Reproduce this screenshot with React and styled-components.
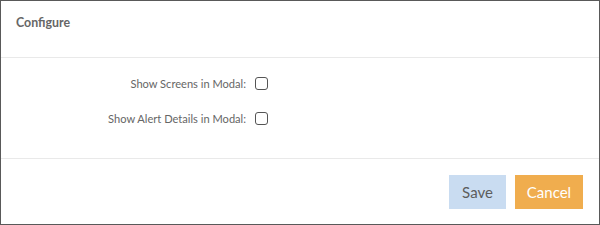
import React from "react";
import styled, { createGlobalStyle } from "styled-components";

const Global = createGlobalStyle`
  html, body { margin: 0; padding: 0; background: #fff; }
  body { font-family: Lato, "DejaVu Sans", sans-serif; }
  * { box-sizing: border-box; }
`;

const Modal = styled.div`
  width: 600px;
  height: 225px;
  border: 1px solid #595959;
  display: flex;
  flex-direction: column;
  background: #fff;
`;

const Header = styled.div`
  height: 57px;
  border-bottom: 1px solid #e9e9e9;
  padding: 14px 0 0 15px;
`;

const Title = styled.h4`
  margin: 0;
  font-size: 12.4px;
  font-weight: 700;
  color: #666;
  line-height: 16px;
`;

const Body = styled.div`
  height: 101px;
  border-bottom: 1px solid #e9e9e9;
  padding-top: 16px;
  display: flex;
  flex-direction: column;
  gap: 17px;
`;

const Row = styled.label`
  display: grid;
  grid-template-columns: 245px auto;
  column-gap: 9px;
  align-items: center;
  height: 18px;
`;

const Label = styled.span`
  text-align: right;
  font-size: 11.1px;
  color: #666;
`;

const Box = styled.span`
  width: 13px;
  height: 13px;
  border: 1px solid #555;
  border-radius: 3px;
  background: #fff;
  display: block;
`;

const Footer = styled.div`
  flex: 1;
  display: flex;
  justify-content: flex-end;
  align-items: flex-start;
  padding: 16px 16px 0 0;
  gap: 9px;
`;

const Button = styled.button`
  height: 34px;
  width: ${(p) => p.$w}px;
  border: none;
  padding: 0;
  font-family: Lato, "DejaVu Sans", sans-serif;
  font-size: 15px;
  background: ${(p) => p.$bg};
  color: ${(p) => p.$fg};
  cursor: pointer;
`;

export default function App() {
  return (
    <>
      <Global />
      <Modal>
        <Header>
          <Title>Configure</Title>
        </Header>
        <Body>
          <Row>
            <Label>Show Screens in Modal:</Label>
            <Box />
          </Row>
          <Row>
            <Label>Show Alert Details in Modal:</Label>
            <Box />
          </Row>
        </Body>
        <Footer>
          <Button $bg="#c9dcf1" $fg="#5c5c5c" $w={57}>Save</Button>
          <Button $bg="#f0ad4e" $fg="#fff" $w={68}>Cancel</Button>
        </Footer>
      </Modal>
    </>
  );
}
